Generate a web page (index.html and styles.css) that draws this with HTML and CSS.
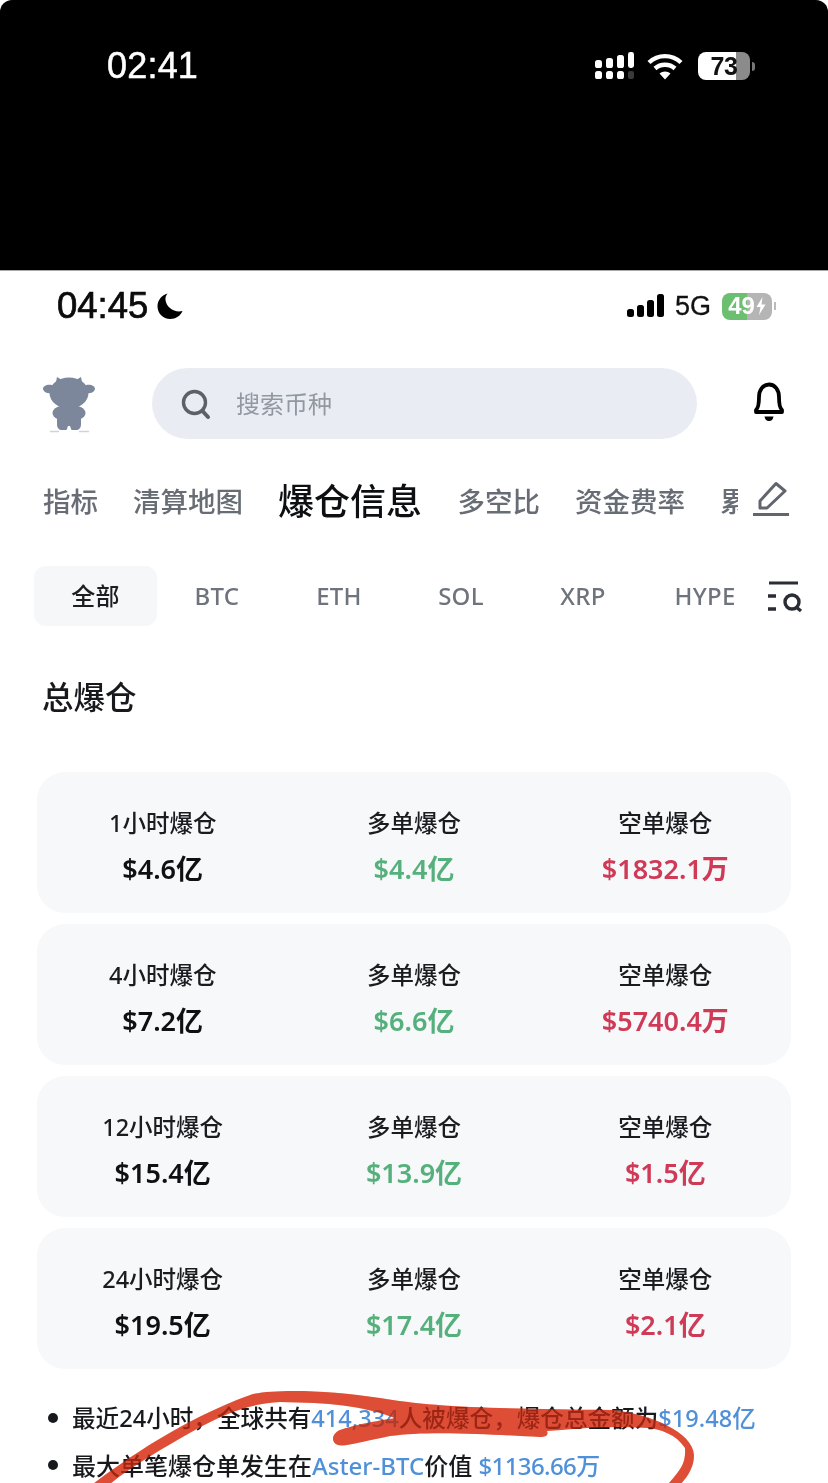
FILE: index.html
```html
<!DOCTYPE html>
<html lang="zh-CN">
<head>
<meta charset="utf-8">
<title>爆仓信息</title>
<link rel="stylesheet" href="styles.css">
</head>
<body>
<div class="screen">
  <header class="outer-bar">
    <span class="outer-time">02:41</span>
    <div class="outer-icons">
      <svg class="cell-dots" viewBox="0 0 40 28" width="40" height="28">
        <g fill="#fff">
          <rect x="0" y="8" width="7" height="8" rx="2.600"/><rect x="0" y="19" width="7" height="8" rx="2.600"/>
          <rect x="11" y="6" width="7" height="10" rx="2.600"/><rect x="11" y="19" width="7" height="8" rx="2.600"/>
          <rect x="22" y="3" width="7" height="13" rx="2.600"/><rect x="22" y="19" width="7" height="8" rx="2.600"/>
          <rect x="33" y="0" width="6" height="16" rx="2.400"/>
        </g>
        <rect x="33" y="19" width="6" height="8" rx="2" fill="#3a3a3a"/>
      </svg>
      <svg class="wifi" viewBox="0 0 36 28" width="36" height="28">
        <g fill="none" stroke="#fff" stroke-width="4.400">
          <path d="M2 10.500C11 2 25 2 34 10.500"/>
          <path d="M8 16.500C13.500 11.500 22.500 11.500 28 16.500"/>
        </g>
        <path d="M12.500 21.500C15.500 18.700 20.500 18.700 23.500 21.500L18 27.500Z" fill="#fff"/>
      </svg>
      <div class="outer-batt"><span class="outer-batt-num">73</span></div>
      <span class="outer-batt-tip"></span>
    </div>
  </header>

  <main class="app">
    <div class="inner-bar">
      <div class="inner-left">
        <span class="inner-time">04:45</span>
        <svg viewBox="0 0 28 28" width="28" height="28"><path d="M11.500 1.500C6 3 1.500 8 1.500 14.300C1.500 21.500 7 27 14.200 27C19.800 27 24.500 23.800 26.500 19C18.500 21 10.300 15.500 9.500 8C9.200 5.500 10 3.200 11.500 1.500Z" fill="#000"/></svg>
      </div>
      <div class="inner-right">
        <svg viewBox="0 0 38 24" width="38" height="24">
          <rect x="0" y="15" width="7" height="8" rx="2.500"/><rect x="10" y="11" width="7" height="12" rx="2.500"/><rect x="20" y="6" width="7" height="17" rx="2.500"/><rect x="30" y="0" width="7" height="23" rx="2.500"/>
        </svg>
        <span class="net">5G</span>
        <div class="inner-batt"><span>49</span><svg viewBox="0 0 10 18" width="10" height="18"><path d="M6.500 0L0.500 10H4.500L3 18L9.500 7.500H5.500Z" fill="#fff"/></svg></div>
        <span class="inner-batt-tip"></span>
      </div>
    </div>

    <div class="search-row">
      <svg class="avatar" viewBox="0 0 52 56" width="52" height="56">
        <g fill="#7c879c">
          <path d="M13 5L14 0L19 3H33L38 0L39 5L34 10H18Z"/>
          <ellipse cx="26" cy="16" rx="19.500" ry="15.500"/>
          <path d="M9 8C4 7 0 9 0 12C1 16 5 17 10 16ZM43 8C48 7 52 9 52 12C51 16 47 17 42 16Z"/>
          <ellipse cx="26" cy="36" rx="16.500" ry="8.500"/>
          <path d="M14 40H38V47C38 51 36 53 33 53H28.500L27 49H25L23.500 53H19C16 53 14 51 14 47Z"/>
        </g>
        <path d="M7 54.500H16M36 54.500H46" stroke="#cfd3da" stroke-width="1.500" fill="none"/>
      </svg>
      <div class="search">
        <svg viewBox="0 0 32 32" width="32" height="32"><circle cx="14.500" cy="14.500" r="11" fill="none" stroke="#5b6069" stroke-width="3.400"/><path d="M22.500 23L28 29" stroke="#5b6069" stroke-width="4" stroke-linecap="round"/></svg>
        <span class="search-text">搜索币种</span>
      </div>
      <svg class="bell" viewBox="0 0 34 40" width="34" height="40">
        <path d="M4 30H30V28C27.500 26 27 22 27 15C27 8 23 2.500 17 2.500C11 2.500 7 8 7 15C7 22 6.500 26 4 28Z" fill="none" stroke="#000" stroke-width="3.800" stroke-linejoin="round"/>
        <path d="M12.500 34.500H21.500C21 37.500 19.500 39 17 39C14.500 39 13 37.500 12.500 34.500Z" fill="#000"/>
      </svg>
    </div>

    <nav class="tabs">
      <span class="tab t1">指标</span>
      <span class="tab t2">清算地图</span>
      <span class="tab active">爆仓信息</span>
      <span class="tab t3">多空比</span>
      <span class="tab t4">资金费率</span>
      <span class="tab t5">累</span>
      <svg class="pen" viewBox="0 0 38 36" width="38" height="36">
        <path d="M24 2.500L33 10L15 27H8V20Z" fill="none" stroke="#60656e" stroke-width="3" stroke-linejoin="round"/>
        <path d="M1 33.500H37" stroke="#60656e" stroke-width="3.200"/>
      </svg>
    </nav>

    <div class="chips">
      <span class="chip on">全部</span>
      <span class="chip">BTC</span>
      <span class="chip">ETH</span>
      <span class="chip">SOL</span>
      <span class="chip">XRP</span>
      <span class="chip">HYPE</span>
      <svg class="filter" viewBox="0 0 36 32" width="36" height="32">
        <path d="M2 2H31" stroke="#2a2d33" stroke-width="3"/>
        <path d="M1 15H9M1 28H9" stroke="#2a2d33" stroke-width="3.600"/>
        <circle cx="25" cy="21" r="7" fill="none" stroke="#2a2d33" stroke-width="3.400"/>
        <path d="M29 26L34 30" stroke="#2a2d33" stroke-width="3.400"/>
      </svg>
    </div>

    <h2 class="title">总爆仓</h2>

    <section class="cards">
      <div class="card">
        <div class="cell"><span class="lab">1小时爆仓</span><span class="val">$4.6亿</span></div>
        <div class="cell"><span class="lab">多单爆仓</span><span class="val green">$4.4亿</span></div>
        <div class="cell"><span class="lab">空单爆仓</span><span class="val red">$1832.1万</span></div>
      </div>
      <div class="card">
        <div class="cell"><span class="lab">4小时爆仓</span><span class="val">$7.2亿</span></div>
        <div class="cell"><span class="lab">多单爆仓</span><span class="val green">$6.6亿</span></div>
        <div class="cell"><span class="lab">空单爆仓</span><span class="val red">$5740.4万</span></div>
      </div>
      <div class="card">
        <div class="cell"><span class="lab">12小时爆仓</span><span class="val">$15.4亿</span></div>
        <div class="cell"><span class="lab">多单爆仓</span><span class="val green">$13.9亿</span></div>
        <div class="cell"><span class="lab">空单爆仓</span><span class="val red">$1.5亿</span></div>
      </div>
      <div class="card">
        <div class="cell"><span class="lab">24小时爆仓</span><span class="val">$19.5亿</span></div>
        <div class="cell"><span class="lab">多单爆仓</span><span class="val green">$17.4亿</span></div>
        <div class="cell"><span class="lab">空单爆仓</span><span class="val red">$2.1亿</span></div>
      </div>
    </section>

    <ul class="notes">
      <li class="first">最近24小时，全球共有<span class="link">414,334</span>人被爆仓，爆仓总金额为<span class="link">$19.48亿</span></li>
      <li>最大单笔爆仓单发生在<span class="link">Aster-BTC</span>价值 <span class="link tight">$1136.66万</span></li>
    </ul>
  </main>

  <svg class="scribble" viewBox="0 0 828 1483" width="828" height="1483">
    <defs>
      <path id="ink" d="M85 1490C150 1440 207 1410 253 1394C277 1389 330 1390 380 1398C430 1407 500 1409 613 1410C650 1414 693 1432 694 1455C694 1470 685 1480 675 1490L663 1490C680 1470 686 1465 685 1448C676 1434 660 1429 647 1428C600 1425 570 1430 547 1431C549 1436 545 1437 540 1437C500 1435 430 1430 390 1436C365 1441 345 1447 338 1445C331 1443 331 1434 340 1430C365 1422 385 1420 395 1418C360 1405 330 1403 280 1402C253 1403 225 1413 195 1430C160 1450 125 1470 103 1490Z"/>
    </defs>
    <use href="#ink" class="ink-wash"/>
    <use href="#ink" class="ink-tint"/>
  </svg>
</div>
</body>
</html>
```

FILE: styles.css
```css
* { box-sizing: border-box; }
html, body { margin: 0; padding: 0; }
body { width: 828px; height: 1483px; overflow: hidden; background: #fff; font-family: "Noto Sans", "Noto Sans CJK SC", sans-serif; }
svg { display: block; flex: none; }

.screen { position: relative; width: 828px; height: 1483px; overflow: hidden; background: #fff; }

.outer-bar { height: 271px; background: #000; border-bottom: 1px solid #a9a9a9; border-radius: 12px 12px 0 0; padding: 45px 73px 0 107px; display: flex; justify-content: space-between; align-items: flex-start; }
.outer-time { color: #fff; font-family: "Liberation Sans", sans-serif; font-size: 36px; line-height: 42px; letter-spacing: 0.2px; -webkit-text-stroke: 0.5px #fff; }
.outer-icons { display: flex; align-items: center; height: 42px; }
.wifi { margin-left: 12px; }
.outer-batt { margin-left: 15px; width: 52px; height: 28px; border-radius: 8px; background: linear-gradient(90deg, #fff 0 73%, #8b8b8b 73% 100%); display: flex; align-items: center; justify-content: center; }
.outer-batt-num { font-family: "Liberation Sans", sans-serif; font-weight: 700; font-size: 25px; color: #111; letter-spacing: -0.5px; line-height: 28px; }
.outer-batt-tip { width: 3px; height: 9px; margin-left: 2px; background: #777; border-radius: 0 3px 3px 0; }

.inner-bar { height: 70px; display: flex; justify-content: space-between; align-items: center; padding: 0 52px 0 57px; }
.inner-left { display: flex; align-items: center; gap: 8px; }
.inner-time { font-family: "Liberation Sans", sans-serif; font-size: 36.500px; font-weight: 400; -webkit-text-stroke: 0.7px #0b0b0b; color: #0b0b0b; line-height: 40px; }
.inner-right { display: flex; align-items: center; }
.net { margin-left: 10px; font-family: "Liberation Sans", sans-serif; font-size: 27px; color: #111; line-height: 30px; -webkit-text-stroke: 0.3px #111; }
.inner-batt { margin-left: 11px; width: 50px; height: 27px; border-radius: 8px; background: linear-gradient(90deg, #6cbf71 0 50%, #b5b5b5 50% 100%); display: flex; align-items: center; justify-content: center; gap: 1px; color: #fff; font-family: "Liberation Sans", sans-serif; font-size: 24px; font-weight: 700; }
.inner-batt-tip { width: 2px; height: 8px; margin-left: 2px; background: #bbb; }

.search-row { display: flex; align-items: center; height: 71px; margin-top: 27px; padding: 0 42px 0 43px; }
.avatar { margin-top: 2px; }
.search { flex: none; margin-left: 57px; width: 545px; height: 71px; border-radius: 36px; background: #e9edf3; display: flex; align-items: center; padding: 0 0 0 28px; gap: 24px; }
.search-text { font-size: 24px; color: #9298a2; line-height: 30px; }
.bell { margin-left: 55px; margin-top: -4px; }

.tabs { position: relative; height: 48px; margin-top: 39px; display: flex; align-items: center; padding-left: 43px; color: #676c75; font-size: 27.500px; font-weight: 500; white-space: nowrap; }
.tab { line-height: 48px; }
.t2 { margin-left: 35px; }
.active { margin-left: 35px; font-size: 36px; font-weight: 500; color: #0d0f12; }
.t3 { margin-left: 35.500px; }
.t4 { margin-left: 35px; }
.t5 { margin-left: 35px; width: 18px; overflow: hidden; }
.pen { margin-left: 14px; margin-top: -6px; }

.chips { display: flex; align-items: center; height: 60px; margin-top: 40px; padding-left: 34px; }
.chip { width: 122px; height: 60px; line-height: 60px; text-align: center; font-size: 24px; font-weight: 500; letter-spacing: 0.3px; color: #6e737c; }
.chip.on { width: 123px; margin-right: -1px; background: #f5f7f9; border-radius: 12px; color: #1c1e22; }
.filter { margin-left: 1px; margin-top: 2px; }

.title { margin: 48px 0 0 42px; height: 46px; line-height: 46px; font-size: 31.500px; font-weight: 500; color: #17191d; }

.cards { margin: 52px 37px 0; display: flex; flex-direction: column; gap: 11px; }
.card { height: 141px; border-radius: 28px; background: #f6f8fa; display: grid; grid-template-columns: repeat(3, 1fr); }
.cell { display: flex; flex-direction: column; align-items: center; padding-top: 34px; }
.lab { font-size: 23.500px; line-height: 34px; font-weight: 500; color: #1a1c20; }
.val { margin-top: 12px; font-size: 27px; line-height: 34px; font-weight: 600; color: #0e1013; }
.green { color: #55b07c; }
.red { color: #cf3a57; }

.notes { list-style: none; margin: 26px 0 0; padding: 0 0 0 72px; font-size: 24px; font-weight: 500; color: #17191d; }
.notes li { position: relative; height: 47px; line-height: 47px; white-space: nowrap; }
.notes li.first { font-size: 23.600px; }
.notes li::before { content: ""; position: absolute; left: -24px; top: 18px; width: 10px; height: 10px; border-radius: 50%; background: #17191d; }
.link { color: #4f90d8; }
.tight { letter-spacing: -0.600px; }

.scribble { position: absolute; left: 0; top: 0; pointer-events: none; }
.ink-wash { fill: #e4502f; fill-opacity: 0.7; }
.ink-tint { fill: #f0967d; mix-blend-mode: multiply; }
```
